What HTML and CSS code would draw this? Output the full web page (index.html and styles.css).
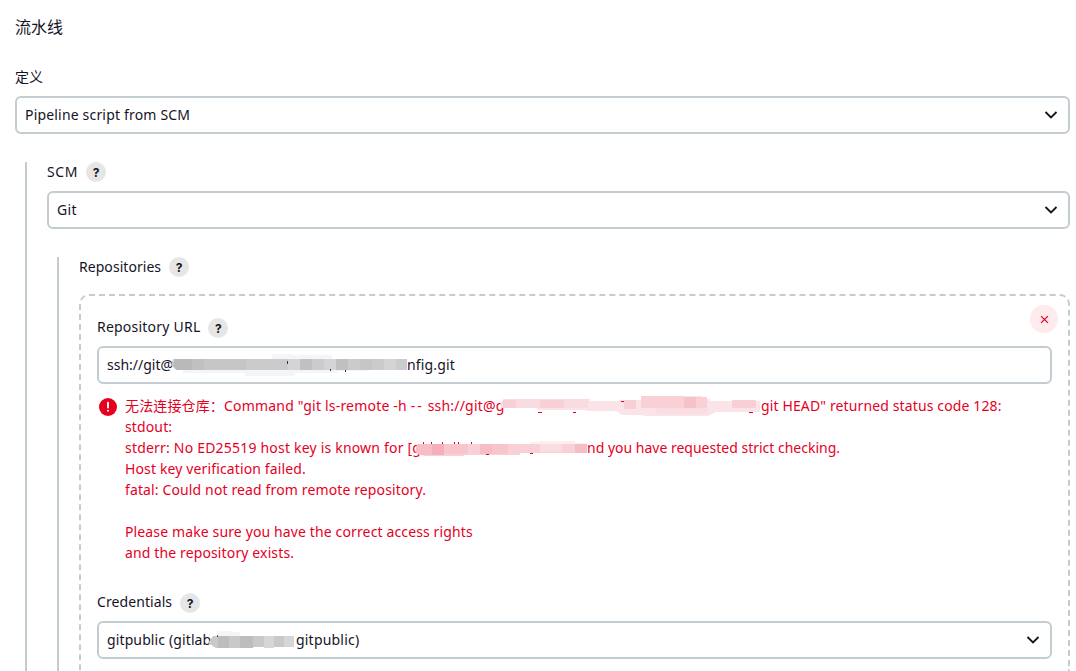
FILE: index.html
```
<!DOCTYPE html>
<html lang="zh-CN">
<head>
    <meta charset="UTF-8">
    <meta name="viewport" content="width=device-width, initial-scale=1.0">
    <title>流水线</title>
    <link rel="stylesheet" href="styles.css">
</head>
<body>
    <div class="page">
        <h2 class="section-title">流水线</h2>
        <div class="form-label definition"><span>定义</span></div>
        <div class="select">
            <span class="t-script">Pipeline script from SCM</span>
            <svg class="chevron" viewBox="0 0 14 10"><path d="M1.5 2l5.5 5.5L12.500 2"/></svg>
        </div>

        <div class="nested nested-scm">
            <div class="form-label"><span class="t-scm">SCM</span><span class="help">?</span></div>
            <div class="select">
                <span class="t-git">Git</span>
                <svg class="chevron" viewBox="0 0 14 10"><path d="M1.5 2l5.5 5.5L12.500 2"/></svg>
            </div>

            <div class="nested nested-repos">
                <div class="form-label"><span class="t-repos">Repositories</span><span class="help">?</span></div>
                <div class="repeated-box">
                    <button class="remove"><svg viewBox="0 0 10 10"><path d="M1.200 1.200l7.600 7.600M8.800 1.200L1.200 8.800"/></svg></button>

                    <div class="form-label"><span class="t-url">Repository URL</span><span class="help">?</span></div>
                    <div class="input">
                        <span class="url-start">ssh://git@</span>
                        <svg class="mask mask-url" viewBox="171 355 236 22">
                            <path fill="#f4f5f7" d="M171 364h12v10h62v3h50v-3h43v-2h30v-1h38v-11h-74v-4h-40v-1h-20v9z"/>
                            <path fill="#cbcbcd" d="M173 360h234v11H176l-5-5z"/>
                            <path fill="#b9b9bb" d="M175 360h17v11h-15l-4-4z"/>
                            <path fill="#c0c0c3" d="M192 360h12v11h-12zM300 360h12v11h-12zM336 360h12v11h-12z"/>
                            <path fill="#c6c6c8" d="M204 360h42v11h-42zM360 360h12v11h-12z"/>
                            <path fill="#d4d4d6" d="M288 360h12v11h-12zM324 360h12v11h-12zM384 360h12v11h-12z"/>
                            <path fill="#333" d="M287 362h1v3h-1zM330 370h1v2h-1zM345 371h1v2h-1z"/>
                        </svg>
                        <span class="url-end">nfig.git</span>
                    </div>

                    <div class="error">
                        <svg class="error-icon" viewBox="0 0 18 18"><circle cx="9" cy="9" r="9" fill="#e6001f"/><path d="M9 4.800v4.700M9 12.600v.2" stroke="#fff" stroke-width="1.900" stroke-linecap="round"/></svg>
                        <div class="error-text">
                            <div class="line"><span class="err1-start">无法连接仓库：<span class="t-cmd">Command "git ls-remote -h <span class="dashes">--</span> ssh://git@g</span></span><svg class="mask mask-err1" viewBox="500 395 261 22">
                                    <path fill="#fbe4e8" d="M503 399h87v2h29v-1h22v-4h61v3h8v2h50v11h-44l-8 4h-62l-6-1h-18l-6-4h-30v-1h-49v-3h-36z"/>
                                    <path fill="#f9dce1" d="M504 399h84v9h-86l-2-4z"/>
                                    <path fill="#f8cfd5" d="M503 400h13v8h-13zM540 400h24v8h-24zM624 400h12v9h-12zM732 400h24v8h-24z"/>
                                    <path fill="#f8d0d6" d="M641 396h43v12h-43zM696 397h11v11h-11z"/>
                                    <path fill="#f6c2ca" d="M684 397h12v11h-12z"/>
                                    <path fill="#fadde2" d="M654 408h54v6h-50z"/>
                                    <path fill="#e6001f" d="M538 412h4v1h-4zM573 412h3v1h-3zM621 401h3v1h-3zM749 412h4v1h-4z"/>
                                </svg><span class="err1-end">git HEAD" returned status code 128:</span></div>
                            <div class="line">stdout:</div>
                            <div class="line"><span class="err2-start">stderr: No ED25519 host key is known for [g</span><svg class="mask mask-err2" viewBox="415 437 172 22">
                                    <path fill="#fdeef0" d="M530 442h10v-1h35v2h12v8h-60z"/>
                                    <path fill="#f9d0d6" d="M417 444h170v9h-67v2h-56v1h-39l-8-2z"/>
                                    <path fill="#f7bdc6" d="M417 444h27v11h-24l-5-3zM480 444h12v10h-12zM575 444h12v9h-12z"/>
                                    <path fill="#f5afba" d="M432 444h12v11h-12z"/>
                                    <path fill="#f8c5cc" d="M444 444h24v10h-24zM492 444h16v10h-16z"/>
                                    <path fill="#fadde2" d="M540 444h22v8h-22z"/>
                                    <path fill="#e6001f" d="M423 442h1v2h-1zM431 442h1v2h-1zM442 442h1v2h-1zM454 442h1v2h-1zM458 442h1v2h-1zM471 442h1v2h-1zM486 454h3v1h-3zM530 453h3v1h-3z"/>
                                </svg><span class="err2-end">nd you have requested strict checking.</span></div>
                            <div class="line">Host key verification failed.</div>
                            <div class="line">fatal: Could not read from remote repository.</div>
                            <div class="line"></div>
                            <div class="line">Please make sure you have the correct access rights</div>
                            <div class="line">and the repository exists.</div>
                        </div>
                    </div>

                    <div class="form-label credentials"><span class="t-cred">Credentials</span><span class="help">?</span></div>
                    <div class="select">
                        <span class="cred-start">gitpublic (gitlab</span>
                        <svg class="mask mask-cred" viewBox="208 629 86 22">
                            <path fill="#f5f5f6" d="M217 631h15v1h8v4h-23z"/>
                            <path fill="#c9c9cb" d="M213 636h81v11h-45v1h-33l-8-5z"/>
                            <path fill="#bdbdc0" d="M218 636h11v12h-11zM240 636h13v12h-13z"/>
                            <path fill="#d6d6d8" d="M264 636h10v12h-10zM284 636h10v11h-10z"/>
                            <path fill="#555" d="M217 635h1v2h-1z"/>
                        </svg>
                        <span class="cred-end">gitpublic)</span>
                        <svg class="chevron" viewBox="0 0 14 10"><path d="M1.5 2l5.5 5.5L12.500 2"/></svg>
                    </div>
                </div>
            </div>
        </div>
    </div>
</body>
</html>
```
FILE: styles.css
```
* {
    box-sizing: border-box;
}

body {
    margin: 0;
    background: #fff;
    color: #14141f;
    font-family: "Noto Sans", "Noto Sans CJK SC", sans-serif;
    font-size: 14px;
    line-height: 21px;
}

.page {
    padding: 16px 6px 0 15px;
}

.section-title {
    margin: 0 0 29px;
    font-size: 16px;
    font-weight: 400;
    line-height: 22px;
}

.form-label {
    display: flex;
    align-items: center;
    height: 20px;
    margin-bottom: 9px;
    white-space: nowrap;
}

.form-label span,
.select span,
.input span {
    padding-bottom: 2px;
}

.form-label .help {
    width: 20px;
    height: 20px;
    margin-left: 8px;
    padding: 0;
    border-radius: 50%;
    background: #e6e6e6;
    font-family: Inter, sans-serif;
    font-size: 12px;
    font-weight: 700;
    line-height: 21px;
    text-align: center;
}

.select,
.input {
    display: flex;
    align-items: center;
    height: 38px;
    padding: 0 10px 0 8px;
    border: 2px solid #c3ccd1;
    border-radius: 6px;
    background: #fff;
    white-space: nowrap;
}

.chevron {
    width: 14px;
    height: 10px;
    margin-left: auto;
    fill: none;
    stroke: #14141f;
    stroke-width: 1.8;
}

.nested {
    margin: 28px 0 0 10px;
    padding-left: 20px;
    border-left: 2px solid #c3ccd1;
}

.repeated-box {
    position: relative;
    height: 377px;
    margin-top: 17px;
    padding: 22px 16px 0;
    border: 2px dashed #c3ccd1;
    border-bottom: none;
    border-radius: 10px 10px 0 0;
}

.repeated-box .form-label {
    margin-bottom: 8px;
}

.repeated-box .form-label span:first-child {
    padding-bottom: 4px;
}

.remove {
    position: absolute;
    top: 9px;
    right: 10px;
    display: flex;
    align-items: center;
    justify-content: center;
    width: 28px;
    height: 28px;
    padding: 0;
    border: none;
    border-radius: 50%;
    background: #fdebed;
}

.remove svg {
    width: 9px;
    height: 9px;
    stroke: #e6001f;
    stroke-width: 1.4;
}

.error {
    display: flex;
    gap: 8px;
    margin-top: 11px;
    padding-left: 2px;
    color: #e6001f;
    letter-spacing: 0.13px;
}

.error-icon {
    flex: none;
    width: 18px;
    height: 18px;
    margin-top: 3px;
}

.line {
    display: flex;
    align-items: center;
    height: 21px;
    white-space: pre;
}

/* blurred-out parts of host names, drawn over the text */
.mask {
    position: relative;
    flex: none;
    height: 22px;
}

.url-start { width: 64px; }
.mask-url { width: 236px; }
.err1-start { width: 375px; }
.mask-err1 { width: 261px; }
.err2-start { width: 290px; }
.mask-err2 { width: 172px; }
.cred-start { width: 101px; }
.mask-cred { width: 86px; }
.select .cred-end { margin-left: 2px; }

.t-script { letter-spacing: 0.18px; }
.t-scm { letter-spacing: 0.6px; }
.t-git { letter-spacing: 0.3px; }
.t-repos { letter-spacing: 0.05px; }
.t-url { letter-spacing: 0.22px; }
.url-end { letter-spacing: 0.15px; }
.t-cmd { letter-spacing: 0.2px; }
.dashes { letter-spacing: 2px; }
.err2-start { letter-spacing: 0.2px; }
.err2-end { letter-spacing: 0; }
.t-cred { letter-spacing: 0.08px; }
.cred-start { letter-spacing: 0.12px; }
.cred-end { letter-spacing: 0.2px; }

.credentials {
    margin-top: 30px;
}
```
